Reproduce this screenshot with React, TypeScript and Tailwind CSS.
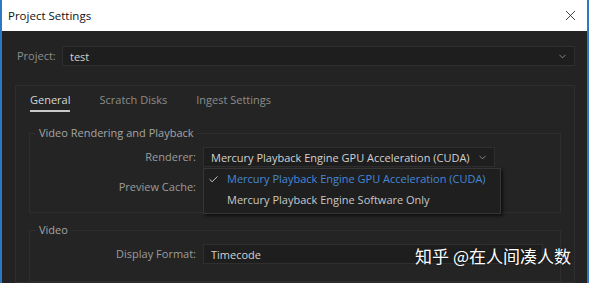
import { ChevronDown, Check, X } from "lucide-react";

const font = "font-['Open_Sans','Noto_Sans',sans-serif]";

function Select({ value, width, open }: { value: string; width: string; open?: boolean }) {
  return (
    <div className={`relative ${width}`}>
      <div className="flex h-[20px] items-center justify-between border border-[#2f2f2f] bg-[#1e1e1e] pl-[7px] pr-[6px] text-[11px] text-[#d2d2d2]">
        <span className="whitespace-nowrap leading-none">{value}</span>
        <ChevronDown size={11} strokeWidth={1.5} className="shrink-0 text-[#b0b0b0]" />
      </div>
      {open && (
        <div className="absolute left-0 top-[21px] z-10 w-[298px] border border-[#363636] bg-[#1f1f1f] pb-[2px] shadow-[2px_2px_3px_rgba(0,0,0,0.6)]">
          <div className="flex h-[20px] items-center whitespace-nowrap text-[11px] text-[#4588d8]">
            <Check size={11} strokeWidth={2} className="ml-[4px] mr-[8px] text-[#d8d8d8]" />
            <span>Mercury Playback Engine GPU Acceleration (CUDA)</span>
          </div>
          <div className="flex h-[22px] items-center whitespace-nowrap pl-[23px] text-[11px] text-[#c8c8c8]">
            <span>Mercury Playback Engine Software Only</span>
          </div>
        </div>
      )}
    </div>
  );
}

function Row({ label, children }: { label: string; children: React.ReactNode }) {
  return (
    <div className="flex items-center">
      <div className="w-[173px] shrink-0 pr-[7px] text-right text-[11px] text-[#9c9c9c]">{label}</div>
      {children}
    </div>
  );
}

function Group({ title, children, className }: { title: string; children: React.ReactNode; className?: string }) {
  return (
    <div className={`relative mx-[13px] border border-[#2e2e2e] ${className ?? ""}`}>
      <div className="absolute -top-[8px] left-[6px] bg-[#242424] px-[3px] text-[11px] leading-[14px] text-[#a4a4a4]">
        {title}
      </div>
      {children}
    </div>
  );
}

export default function App() {
  return (
    <div className={`relative flex h-[283px] w-[589px] flex-col overflow-hidden border-x-2 border-[#2b79c2] bg-[#232323] ${font}`}>
      {/* title bar */}
      <div className="flex h-[31px] shrink-0 items-center justify-between bg-white pl-[6px] pr-[8px]">
        <span className="text-[11.5px] text-[#111]">Project Settings</span>
        <X size={17} strokeWidth={1.2} className="text-[#222]" />
      </div>

      <div className="flex flex-1 flex-col pl-[13px] pr-[12px] pt-[15px]">
        {/* project */}
        <div className="flex items-center">
          <span className="w-[47px] pl-[2px] text-[11px] text-[#8e8e8e]">Project:</span>
          <Select value="test" width="flex-1" />
        </div>

        {/* panel */}
        <div className="mt-[19px] flex flex-1 flex-col border border-[#2e2e2e] bg-[#242424]">
          <div className="flex h-[26px] items-end gap-[29px] pl-[14px] text-[11px]">
            <div className="border-b-2 border-[#c9c9c9] pb-[2px] text-[#d4d4d4]">General</div>
            <div className="pb-[4px] text-[#8c8c8c]">Scratch Disks</div>
            <div className="pb-[4px] text-[#8c8c8c]">Ingest Settings</div>
          </div>

          <Group title="Video Rendering and Playback" className="mt-[21px] h-[80px]">
            <div className="flex flex-col gap-[10px] pt-[13px]">
              <Row label="Renderer:">
                <Select value="Mercury Playback Engine GPU Acceleration (CUDA)" width="w-[292px]" open />
              </Row>
              <Row label="Preview Cache:">
                <div className="h-[20px]" />
              </Row>
            </div>
          </Group>

          <Group title="Video" className="mt-[17px] flex-1">
            <div className="pt-[13px]">
              <Row label="Display Format:">
                <Select value="Timecode" width="w-[340px]" />
              </Row>
            </div>
          </Group>
        </div>
      </div>

      {/* watermark */}
      <div className="absolute bottom-[15px] right-[16px] font-['Noto_Sans_CJK_SC',sans-serif] text-[17px] text-white [text-shadow:0_0_2px_rgba(0,0,0,0.6)]">
        知乎 @在人间凑人数
      </div>
    </div>
  );
}
